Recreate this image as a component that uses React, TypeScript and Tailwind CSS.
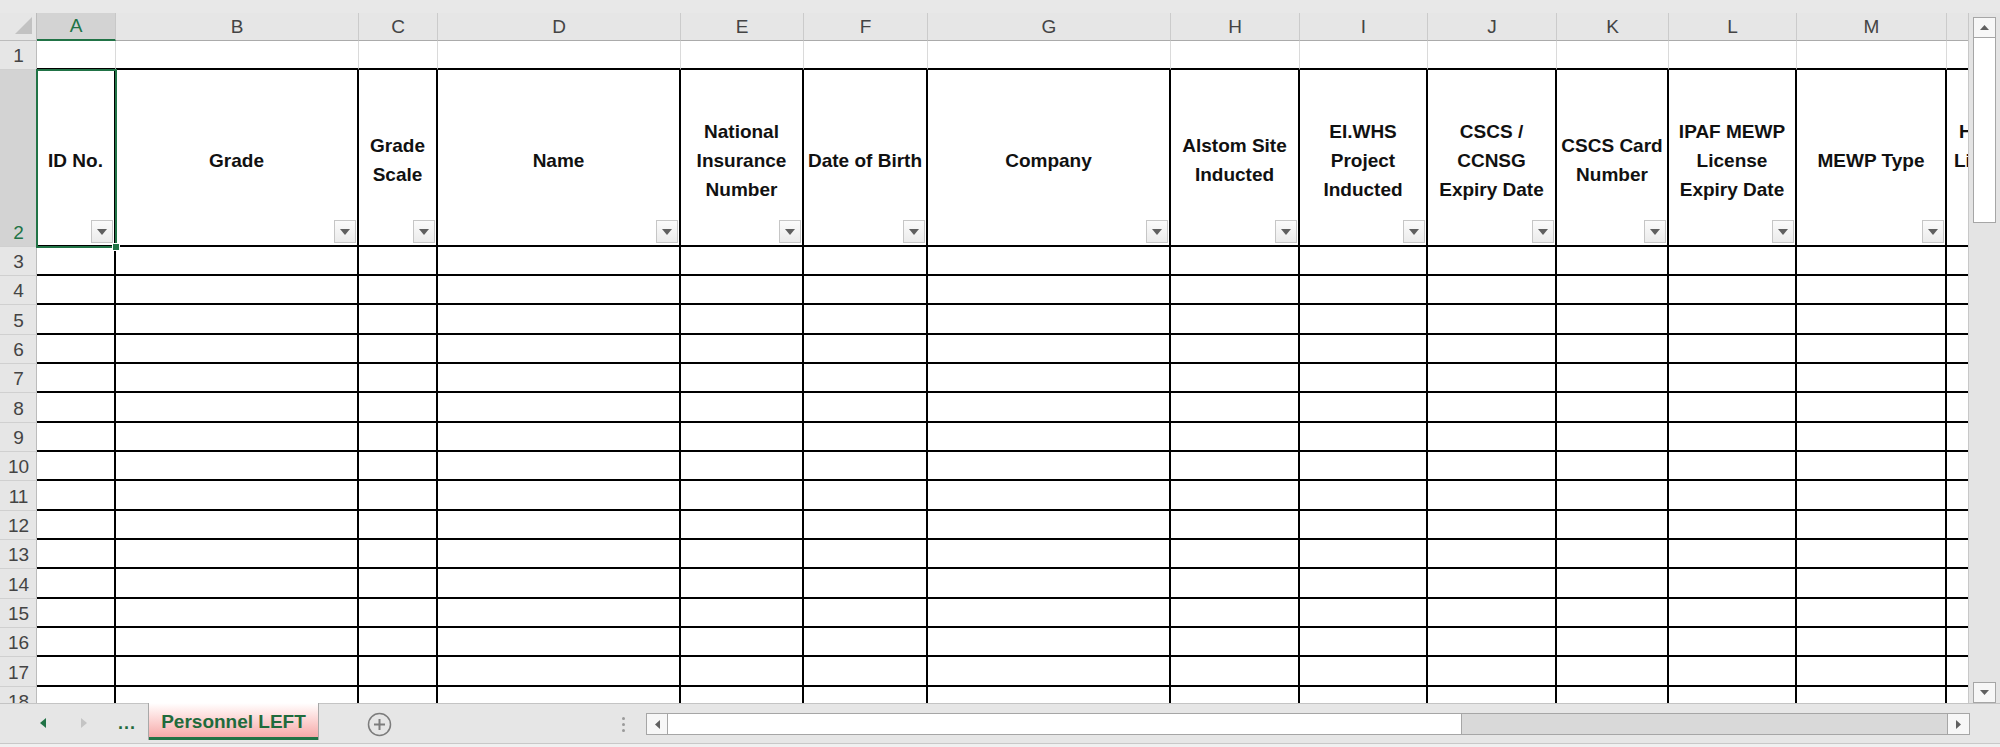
import React from "react";

type Col = { id: string; w: string; head: string[] };

// column widths measured off the sheet, A..N
const COLS: Col[] = [
  { id: "A", w: "w-[79px]", head: ["ID No."] },
  { id: "B", w: "w-[243px]", head: ["Grade"] },
  { id: "C", w: "w-[79px]", head: ["Grade", "Scale"] },
  { id: "D", w: "w-[243px]", head: ["Name"] },
  { id: "E", w: "w-[123px]", head: ["National", "Insurance", "Number"] },
  { id: "F", w: "w-[124px]", head: ["Date of Birth"] },
  { id: "G", w: "w-[243px]", head: ["Company"] },
  { id: "H", w: "w-[129px]", head: ["Alstom Site", "Inducted"] },
  { id: "I", w: "w-[128px]", head: ["EI.WHS", "Project", "Inducted"] },
  { id: "J", w: "w-[129px]", head: ["CSCS /", "CCNSG", "Expiry Date"] },
  { id: "K", w: "w-[112px]", head: ["CSCS Card", "Number"] },
  { id: "L", w: "w-[128px]", head: ["IPAF MEWP", "License", "Expiry Date"] },
  { id: "M", w: "w-[150px]", head: ["MEWP Type"] },
  { id: "N", w: "w-[150px]", head: ["HAVS Trained", "License Expiry", "Date"] },
];

const BODY_ROWS = Array.from({ length: 16 }, (_, i) => i + 3);

function FilterButton() {
  return (
    <div className="absolute bottom-[2px] right-[1px] flex h-[23px] w-[22px] items-center justify-center border border-[#c6c6c6] bg-linear-to-b from-[#fbfbfb] to-[#ebebeb]">
      <svg width="10" height="6" viewBox="0 0 10 6">
        <path d="M0 0h10L5 6z" fill="#5f5f5f" />
      </svg>
    </div>
  );
}

function RowHead({ n, active, h }: { n: number; active?: boolean; h: string }) {
  return (
    <div
      className={`${h} flex w-[37px] shrink-0 justify-center border-r border-b border-r-[#bcbcbc] border-b-[#d0d0d0] pl-[1px] text-[19px] leading-none ${
        active ? "items-end bg-[#d3d3d3] pb-[4px] text-[#217346]" : "items-center bg-[#e6e6e6] pt-[1px] text-[#444]"
      }`}
    >
      {n}
    </div>
  );
}

function ScrollBtn({ dir }: { dir: "up" | "down" | "left" | "right" }) {
  const path = {
    up: "M0 5h9L4.5 0z",
    down: "M0 0h9L4.5 5z",
    left: "M5 0v9L0 4.5z",
    right: "M0 0v9l5-4.5z",
  }[dir];
  const vertical = dir === "up" || dir === "down";
  return (
    <svg width={vertical ? 9 : 5} height={vertical ? 5 : 9} viewBox={vertical ? "0 0 9 5" : "0 0 5 9"}>
      <path d={path} fill="#606060" />
    </svg>
  );
}

export default function App() {
  return (
    <div className="flex h-[747px] w-[2000px] flex-col overflow-hidden bg-[#e6e6e6] font-['Liberation_Sans',Arial,sans-serif]">
      <div className="h-[13px] shrink-0 bg-[#e8e8e8]" />

      <div className="flex h-[690px] shrink-0">
        {/* sheet grid */}
        <div className="relative w-[1969px] shrink-0 overflow-hidden border-r border-[#c8c8c8] bg-white">
          {/* column letters */}
          <div className="flex h-[28px] bg-[#e6e6e6]">
            <div className="relative w-[37px] shrink-0 border-r border-b border-[#bcbcbc]">
              <svg className="absolute left-[15px] top-[4px]" width="18" height="17" viewBox="0 0 18 17">
                <path d="M17 0v17H0z" fill="#c2c2c2" />
              </svg>
            </div>
            {COLS.map((c) =>
              c.id === "A" ? (
                <div
                  key={c.id}
                  className={`${c.w} flex shrink-0 items-center justify-center border-r border-b-2 border-r-[#c8c8c8] border-b-[#217346] bg-[#d3d3d3] pt-[1px] text-[19px] text-[#217346]`}
                >
                  {c.id}
                </div>
              ) : (
                <div
                  key={c.id}
                  className={`${c.w} flex shrink-0 items-center justify-center border-r border-b border-r-[#cbcbcb] border-b-[#ababab] pt-[1px] text-[19px] text-[#444]`}
                >
                  {c.id}
                </div>
              ),
            )}
          </div>

          {/* row 1 */}
          <div className="flex">
            <RowHead n={1} h="h-[29px]" />
            {COLS.map((c) => (
              <div key={c.id} className={`${c.w} h-[29px] shrink-0 border-r border-b-2 border-r-[#dadada] border-b-black`} />
            ))}
          </div>

          {/* row 2: headings with filter buttons */}
          <div className="flex">
            <RowHead n={2} active h="h-[177px]" />
            {COLS.map((c) => (
              <div key={c.id} className={`${c.w} relative h-[177px] shrink-0 border-r-2 border-b-2 border-black`}>
                <div className="flex h-full flex-col items-center justify-center pt-[5px] text-center text-[19px] font-bold leading-[29px] text-[#111]">
                  {c.head.map((line) => (
                    <div key={line} className="whitespace-nowrap">
                      {line}
                    </div>
                  ))}
                </div>
                <FilterButton />
              </div>
            ))}
          </div>

          {/* empty bordered rows */}
          {BODY_ROWS.map((n, i) => {
            const h = i % 3 === 2 ? "h-[30px]" : "h-[29px]";
            return (
              <div key={n} className="flex">
                <RowHead n={n} h={h} />
                {COLS.map((c) => (
                  <div key={c.id} className={`${c.w} ${h} shrink-0 border-r-2 border-b-2 border-black`} />
                ))}
              </div>
            );
          })}

          {/* active cell A2 */}
          <div className="absolute left-[36px] top-[56px] h-[179px] w-[81px] border-2 border-[#217346]" />
          <div className="absolute left-[112px] top-[230px] h-[8px] w-[8px] border border-white bg-[#217346]" />
        </div>

        {/* vertical scrollbar */}
        <div className="flex w-[31px] shrink-0 flex-col bg-[#e4e4e4] pl-[4px] pr-[4px] pt-[4px]">
          <div className="flex h-[21px] shrink-0 items-center justify-center border border-[#a6a6a6] bg-[#f7f7f7]">
            <ScrollBtn dir="up" />
          </div>
          <div className="h-[185px] shrink-0 border border-t-0 border-[#a6a6a6] bg-white" />
          <div className="flex-1" />
          <div className="flex h-[21px] shrink-0 items-center justify-center border border-[#a6a6a6] bg-[#f7f7f7]">
            <ScrollBtn dir="down" />
          </div>
        </div>
      </div>

      {/* sheet tabs + horizontal scrollbar */}
      <div className="flex h-[40px] shrink-0 items-start border-t border-[#c4c4c4] bg-[#e6e6e6]">
        <svg className="ml-[40px] mt-[14px]" width="6" height="10" viewBox="0 0 6 10">
          <path d="M6 0v10L0 5z" fill="#217346" />
        </svg>
        <svg className="ml-[35px] mt-[14px]" width="6" height="10" viewBox="0 0 6 10">
          <path d="M0 0v10l6-5z" fill="#c4c4c4" />
        </svg>
        <div className="ml-[31px] mt-[10px] text-[18px] font-bold leading-none tracking-[1px] text-[#1f6b3c]">...</div>
        <div className="-mt-[1px] ml-[12px] flex h-[37px] w-[171px] shrink-0 flex-col border-x border-[#a8a8a8] bg-linear-to-b from-white to-[#f3a2a2]">
          <div className="flex flex-1 items-center justify-center pt-[5px] text-[19px] font-bold text-[#1f6b3c]">Personnel LEFT</div>
          <div className="h-[3px] bg-[#217346]" />
        </div>
        <svg className="ml-[48px] mt-[8px]" width="25" height="25" viewBox="0 0 25 25">
          <circle cx="12.5" cy="12.5" r="11" fill="none" stroke="#7c7c7c" strokeWidth="1.5" />
          <path d="M12.5 7v11M7 12.5h11" stroke="#7c7c7c" strokeWidth="2" />
        </svg>
        <div className="ml-[230px] mt-[13px] flex flex-col gap-[3px]">
          <div className="h-[3px] w-[3px] rounded-full bg-[#9a9a9a]" />
          <div className="h-[3px] w-[3px] rounded-full bg-[#9a9a9a]" />
          <div className="h-[3px] w-[3px] rounded-full bg-[#9a9a9a]" />
        </div>
        <div className="ml-[21px] mt-[9px] flex h-[22px] w-[1324px] shrink-0 border border-[#a6a6a6] bg-[#d9d9d9]">
          <div className="flex w-[21px] shrink-0 items-center justify-center border-r border-[#a6a6a6] bg-[#f7f7f7]">
            <ScrollBtn dir="left" />
          </div>
          <div className="w-[794px] shrink-0 border-r border-[#a6a6a6] bg-white" />
          <div className="flex-1" />
          <div className="flex w-[22px] shrink-0 items-center justify-center border-l border-[#a6a6a6] bg-[#f7f7f7]">
            <ScrollBtn dir="right" />
          </div>
        </div>
      </div>
      <div className="h-[1px] shrink-0 bg-[#c8c8c8]" />
      <div className="flex-1 bg-[#f0f0f0]" />
    </div>
  );
}
